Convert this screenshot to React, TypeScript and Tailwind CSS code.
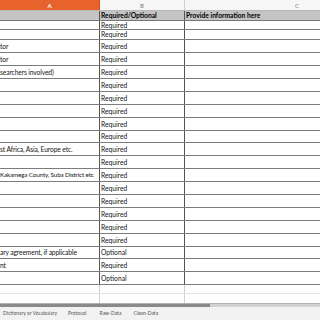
import React from "react";

const rows: { a: string; b: string; h: number; tight?: boolean }[] = [
  { a: "", b: "Required", h: 9 },
  { a: "", b: "Required", h: 10 },
  { a: "tor", b: "Required", h: 13 },
  { a: "tor", b: "Required", h: 13 },
  { a: "searchers involved)", b: "Required", h: 13 },
  { a: "", b: "Required", h: 13 },
  { a: "", b: "Required", h: 13 },
  { a: "", b: "Required", h: 13 },
  { a: "", b: "Required", h: 13 },
  { a: "", b: "Required", h: 12 },
  { a: "st Africa, Asia, Europe etc.", b: "Required", h: 13 },
  { a: "", b: "Required", h: 13 },
  { a: "Kakamega County, Suba District etc", b: "Required", h: 13, tight: true },
  { a: "", b: "Required", h: 13 },
  { a: "", b: "Required", h: 13 },
  { a: "", b: "Required", h: 13 },
  { a: "", b: "Required", h: 13 },
  { a: "", b: "Required", h: 13 },
  { a: "ary agreement, if applicable", b: "Optional", h: 12 },
  { a: "nt", b: "Required", h: 13 },
  { a: "", b: "Optional", h: 13 },
];

export default function App() {
  return (
    <div
      className="w-[320px] h-[320px] overflow-hidden bg-white flex flex-col text-[#161616]"
      style={{ fontFamily: "Lato, 'Liberation Sans', sans-serif" }}
    >
      {/* column letters */}
      <div className="flex h-[11px] shrink-0 border-b border-[#b8b8b8] bg-[#f6f6f6]">
        <div className="w-[100px] shrink-0 bg-[#e8632b] text-white text-[6px] font-bold flex items-center justify-center border-r border-[#d05020]">
          A
        </div>
        <div className="w-[85px] shrink-0 text-[#777] text-[6px] flex items-center justify-center border-r border-[#d0d0d0]">
          B
        </div>
        <div className="w-[224px] shrink-0 text-[#777] text-[6px] flex items-center justify-center">
          C
        </div>
      </div>
      {/* header row */}
      <div className="flex h-[10px] shrink-0 border-b border-[#777] bg-[#c4c4c4] text-[6.7px] font-bold leading-none text-black">
        <div className="w-[100px] shrink-0 border-r border-[#555]" />
        <div className="w-[85px] shrink-0 border-r border-[#555] flex items-center pl-[1px] whitespace-nowrap overflow-hidden">
          Required/Optional
        </div>
        <div className="flex-1 flex items-center pl-[1px] whitespace-nowrap">
          Provide information here
        </div>
      </div>
      {rows.map((r, i) => (
        <div
          key={i}
          className="flex shrink-0 border-b border-[#7c7c7c] text-[6.7px] leading-none"
          style={{ height: r.h }}
        >
          <div
            className={
              r.tight
                ? "w-[100px] shrink-0 border-r border-[#555] flex items-center whitespace-nowrap overflow-hidden text-[6.3px] tracking-[-0.15px]"
                : "w-[100px] shrink-0 border-r border-[#555] flex items-center whitespace-nowrap overflow-hidden tracking-[-0.12px]"
            }
          >
            {r.a}
          </div>
          <div className="w-[85px] shrink-0 border-r border-[#555] flex items-center pl-[1px] whitespace-nowrap">
            {r.b}
          </div>
          <div className="flex-1" />
        </div>
      ))}
      {/* empty rows */}
      <div className="flex h-[9px] shrink-0 border-b border-[#e4e4e4]">
        <div className="w-[100px] shrink-0 border-r border-[#cfcfcf]" />
        <div className="w-[85px] shrink-0 border-r border-[#cfcfcf]" />
        <div className="flex-1" />
      </div>
      <div className="flex flex-1 min-h-0">
        <div className="w-[100px] shrink-0 border-r border-[#cfcfcf]" />
        <div className="w-[85px] shrink-0 border-r border-[#cfcfcf]" />
        <div className="flex-1" />
      </div>
      {/* scrollbar */}
      <div className="flex h-[4px] shrink-0 border-t border-[#b0b0b0]">
        <div className="w-[210px] bg-[#8a8a8a]" />
        <div className="flex-1 bg-[#d2d2d2]" />
      </div>
      {/* tabs */}
      <div className="h-[13px] shrink-0 bg-[#f2f2f2] flex items-center text-[5px] text-[#555] whitespace-nowrap">
        <span className="ml-[3px]">Dictionary or Vocabulary</span>
        <span className="ml-[11px]">Protocol</span>
        <span className="ml-[13px]">Raw-Data</span>
        <span className="ml-[12px]">Clean-Data</span>
      </div>
    </div>
  );
}
